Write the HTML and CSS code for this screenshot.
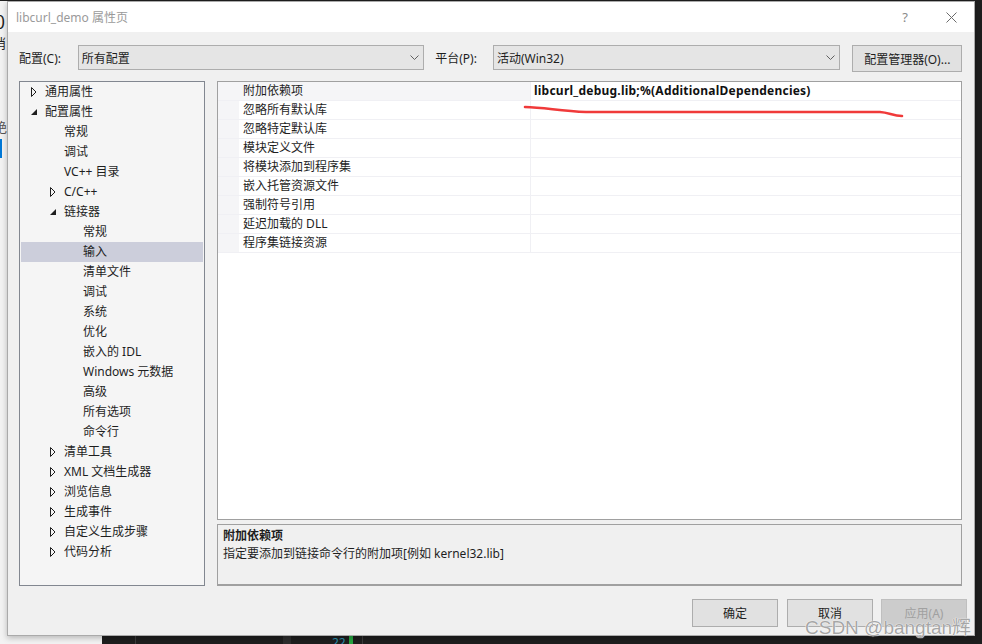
FILE: index.html
```html
<!DOCTYPE html>
<html lang="zh-CN">
<head>
    <meta charset="UTF-8">
    <title>libcurl_demo 属性页</title>
    <link rel="stylesheet" href="styles.css">
</head>
<body>
    <div class="behind-left">
        <span class="frag frag-a">0</span>
        <span class="frag frag-b">消</span>
        <span class="frag frag-c">绝</span>
        <span class="frag-bar"></span>
    </div>
    <div class="behind-bottom">
        <span class="ed-line l1"></span>
        <span class="ed-block"></span>
        <span class="ed-num">22</span>
        <span class="ed-green"></span>
        <span class="ed-line l2"></span>
    </div>

    <div class="dialog">
        <div class="titlebar">
            <span class="title">libcurl_demo 属性页</span>
            <span class="help">?</span>
            <svg class="close" width="11" height="11" viewBox="0 0 11 11"><path d="M0.5 0.5 L10.5 10.5 M10.5 0.5 L0.5 10.5" stroke="#6b6b6b" stroke-width="1"/></svg>
        </div>
        <div class="content">
            <div class="toolbar">
                <span class="lbl">配置(C):</span>
                <div class="combo combo-cfg">
                    <span>所有配置</span>
                    <svg width="9" height="5" viewBox="0 0 9 5"><path d="M0.5 0.5 L4.5 4.5 L8.5 0.5" fill="none" stroke="#606060"/></svg>
                </div>
                <span class="lbl lbl-plat">平台(P):</span>
                <div class="combo combo-plat">
                    <span>活动(Win32)</span>
                    <svg width="9" height="5" viewBox="0 0 9 5"><path d="M0.5 0.5 L4.5 4.5 L8.5 0.5" fill="none" stroke="#606060"/></svg>
                </div>
                <button class="btn btn-mgr">配置管理器(O)...</button>
            </div>

            <div class="main">
                <div class="tree">
                    <div class="node lv0"><span class="tw"><svg width="6" height="10" viewBox="0 0 6 10"><path d="M0.5 0.5 L5 5 L0.5 9.5Z" fill="none" stroke="#1e1e1e"/></svg></span>通用属性</div>
                    <div class="node lv0"><span class="tw"><svg width="6" height="6" viewBox="0 0 6 6"><path d="M6 0 L6 6 L0 6Z" fill="#1e1e1e"/></svg></span>配置属性</div>
                    <div class="node lv1"><span class="tw"></span>常规</div>
                    <div class="node lv1"><span class="tw"></span>调试</div>
                    <div class="node lv1"><span class="tw"></span>VC++ 目录</div>
                    <div class="node lv1"><span class="tw"><svg width="6" height="10" viewBox="0 0 6 10"><path d="M0.5 0.5 L5 5 L0.5 9.5Z" fill="none" stroke="#1e1e1e"/></svg></span>C/C++</div>
                    <div class="node lv1"><span class="tw"><svg width="6" height="6" viewBox="0 0 6 6"><path d="M6 0 L6 6 L0 6Z" fill="#1e1e1e"/></svg></span>链接器</div>
                    <div class="node lv2"><span class="tw"></span>常规</div>
                    <div class="node lv2 selected"><span class="tw"></span>输入</div>
                    <div class="node lv2"><span class="tw"></span>清单文件</div>
                    <div class="node lv2"><span class="tw"></span>调试</div>
                    <div class="node lv2"><span class="tw"></span>系统</div>
                    <div class="node lv2"><span class="tw"></span>优化</div>
                    <div class="node lv2"><span class="tw"></span>嵌入的 IDL</div>
                    <div class="node lv2"><span class="tw"></span>Windows 元数据</div>
                    <div class="node lv2"><span class="tw"></span>高级</div>
                    <div class="node lv2"><span class="tw"></span>所有选项</div>
                    <div class="node lv2"><span class="tw"></span>命令行</div>
                    <div class="node lv1"><span class="tw"><svg width="6" height="10" viewBox="0 0 6 10"><path d="M0.5 0.5 L5 5 L0.5 9.5Z" fill="none" stroke="#1e1e1e"/></svg></span>清单工具</div>
                    <div class="node lv1"><span class="tw"><svg width="6" height="10" viewBox="0 0 6 10"><path d="M0.5 0.5 L5 5 L0.5 9.5Z" fill="none" stroke="#1e1e1e"/></svg></span>XML 文档生成器</div>
                    <div class="node lv1"><span class="tw"><svg width="6" height="10" viewBox="0 0 6 10"><path d="M0.5 0.5 L5 5 L0.5 9.5Z" fill="none" stroke="#1e1e1e"/></svg></span>浏览信息</div>
                    <div class="node lv1"><span class="tw"><svg width="6" height="10" viewBox="0 0 6 10"><path d="M0.5 0.5 L5 5 L0.5 9.5Z" fill="none" stroke="#1e1e1e"/></svg></span>生成事件</div>
                    <div class="node lv1"><span class="tw"><svg width="6" height="10" viewBox="0 0 6 10"><path d="M0.5 0.5 L5 5 L0.5 9.5Z" fill="none" stroke="#1e1e1e"/></svg></span>自定义生成步骤</div>
                    <div class="node lv1"><span class="tw"><svg width="6" height="10" viewBox="0 0 6 10"><path d="M0.5 0.5 L5 5 L0.5 9.5Z" fill="none" stroke="#1e1e1e"/></svg></span>代码分析</div>
                </div>

                <div class="right">
                    <div class="grid">
                        <div class="row current">
                            <span class="gutter"></span>
                            <span class="name">附加依赖项</span>
                            <span class="value bold">libcurl_debug.lib;%(AdditionalDependencies)</span>
                        </div>
                        <div class="row"><span class="gutter"></span><span class="name">忽略所有默认库</span><span class="value"></span></div>
                        <div class="row"><span class="gutter"></span><span class="name">忽略特定默认库</span><span class="value"></span></div>
                        <div class="row"><span class="gutter"></span><span class="name">模块定义文件</span><span class="value"></span></div>
                        <div class="row"><span class="gutter"></span><span class="name">将模块添加到程序集</span><span class="value"></span></div>
                        <div class="row"><span class="gutter"></span><span class="name">嵌入托管资源文件</span><span class="value"></span></div>
                        <div class="row"><span class="gutter"></span><span class="name">强制符号引用</span><span class="value"></span></div>
                        <div class="row"><span class="gutter"></span><span class="name">延迟加载的 DLL</span><span class="value"></span></div>
                        <div class="row"><span class="gutter"></span><span class="name">程序集链接资源</span><span class="value"></span></div>
                    </div>
                    <div class="desc">
                        <div class="desc-title">附加依赖项</div>
                        <div class="desc-text">指定要添加到链接命令行的附加项[例如 kernel32.lib]</div>
                    </div>
                </div>
            </div>

            <div class="buttons">
                <button class="btn btn-ok">确定</button>
                <button class="btn btn-cancel">取消</button>
                <button class="btn btn-apply" disabled>应用(A)</button>
            </div>
        </div>
    </div>

    <!-- hand-drawn underline on the screenshot -->
    <svg class="scribble" width="982" height="644" viewBox="0 0 982 644">
        <path d="M525 107 C 545 107.5, 560 111, 586 112 L 880 112 C 889 112.5, 893 116, 902 116" fill="none" stroke="#f03a3a" stroke-width="2.6" stroke-linecap="round"/>
    </svg>
    <div class="watermark">CSDN @bangtan辉</div>
</body>
</html>
```

FILE: styles.css
```css
body {
    margin: 0;
    width: 982px;
    height: 644px;
    overflow: hidden;
    position: relative;
    background-color: #1e1e1e;
    font-family: "Noto Sans", "Noto Sans CJK SC", sans-serif;
    font-size: 12px;
    color: #1e1e1e;
}

/* windows behind the dialog */
.behind-left {
    position: absolute;
    left: 0;
    top: 1px;
    width: 102px;
    height: 643px;
    background-color: #f3f3f3;
    overflow: hidden;
}
.frag {
    position: absolute;
    font-family: "Noto Sans CJK SC", sans-serif;
    color: #222;
}
.frag-a {
    left: -5px;
    top: 7px;
    font-size: 18px;
}
.frag-b {
    left: -7px;
    top: 32px;
    font-size: 13px;
}
.frag-c {
    left: -6px;
    top: 116px;
    font-size: 13px;
    color: #555;
}
.frag-bar {
    position: absolute;
    left: 0;
    top: 138px;
    width: 2px;
    height: 19px;
    background-color: #0078d7;
}
.behind-bottom {
    position: absolute;
    left: 102px;
    top: 636px;
    width: 880px;
    height: 8px;
    background-color: #1e1e1e;
}
.ed-line {
    position: absolute;
    top: 0;
    width: 1px;
    height: 8px;
    background-color: #3c3c3c;
}
.ed-line.l1 { left: 33px; }
.ed-line.l2 { left: 260px; }
.ed-block {
    position: absolute;
    left: 181px;
    top: 0;
    width: 8px;
    height: 8px;
    background-color: #2d2d2d;
}
.ed-num {
    position: absolute;
    left: 230px;
    top: 1px;
    font-size: 12px;
    line-height: 12px;
    color: #2b91af;
}
.ed-green {
    position: absolute;
    left: 247px;
    top: 0;
    width: 4px;
    height: 8px;
    background-color: #26a641;
}

/* dialog */
.dialog {
    position: absolute;
    left: 7px;
    top: 1px;
    width: 966px;
    height: 633px;
    border: 1px solid #aaaaaa;
    background-color: #f0f0f0;
    box-shadow: 0 2px 6px rgba(0, 0, 0, 0.25);
    display: flex;
    flex-direction: column;
}
.titlebar {
    height: 30px;
    background-color: #fff;
    display: flex;
    align-items: center;
    padding-left: 8px;
}
.title {
    color: #9a9a9a;
    font-size: 12px;
    flex: 1;
}
.help {
    color: #8a8a8a;
    font-size: 13px;
    margin-right: 38px;
}
.close {
    margin-right: 17px;
}
.content {
    flex: 1;
    padding: 0 12px 0 11px;
    display: flex;
    flex-direction: column;
}
.toolbar {
    margin-top: 13px;
    height: 27px;
    display: flex;
    align-items: center;
}
.lbl {
    width: 59px;
    margin-top: -2px;
}
.lbl-plat {
    margin-left: 11px;
    width: 58px;
}
.combo {
    height: 23px;
    margin-top: -2px;
    border: 1px solid #adadad;
    background-color: #e5e5e5;
    display: flex;
    align-items: center;
    justify-content: space-between;
    padding: 0 4px 0 3px;
    box-sizing: content-box;
}
.combo-cfg {
    width: 339px;
}
.combo-plat {
    width: 340px;
}
.btn {
    font-family: inherit;
    font-size: 12px;
    color: #1e1e1e;
    background-color: #e1e1e1;
    border: 1px solid #adadad;
    padding: 0;
    margin: 0;
}
.btn-mgr {
    margin-left: 12px;
    width: 110px;
    height: 27px;
}

.main {
    margin-top: 9px;
    display: flex;
    gap: 12px;
    height: 505px;
}
.tree {
    width: 182px;
    border: 1px solid #828790;
    background-color: #f5f5f5;
    padding: 0 1px;
    box-sizing: content-box;
    height: 503px;
}
.node {
    height: 20px;
    line-height: 20px;
    display: flex;
    align-items: center;
    white-space: nowrap;
}
.node.lv0 { padding-left: 10px; }
.node.lv1 { padding-left: 29px; }
.node.lv2 { padding-left: 48px; }
.node.selected {
    background-color: #cccedb;
}
.tw {
    width: 14px;
    flex-shrink: 0;
    display: flex;
    align-items: center;
}

.right {
    flex: 1;
    display: flex;
    flex-direction: column;
    gap: 4px;
}
.grid {
    height: 439px;
    border: 1px solid #a0a0a0;
    background-color: #fff;
}
.row {
    display: flex;
    height: 18px;
    border-bottom: 1px solid #f0f0f4;
    line-height: 18px;
}
.gutter {
    width: 21px;
    background-color: #f5f5f7;
}
.name {
    width: 287px;
    padding-left: 4px;
    border-right: 1px solid #f0f0f4;
}
.row.current .name {
    background-color: #f5f5f7;
}
.value {
    flex: 1;
    padding-left: 3px;
}
.value.bold {
    font-weight: bold;
    color: #111;
    letter-spacing: 0.23px;
}
.desc {
    height: 57px;
    border: 1px solid #a0a0a0;
    border-bottom-width: 2px;
    padding: 2px 5px 0;
    line-height: 18px;
}
.desc-title {
    font-weight: bold;
}

.buttons {
    margin-top: 13px;
    margin-right: -5px;
    display: flex;
    justify-content: flex-end;
}
.buttons .btn {
    width: 86px;
    height: 28px;
}
.btn-ok {
    margin-right: 9px;
}
.btn-cancel {
    margin-right: 8px;
}
.btn-apply {
    background-color: #cccccc;
    border-color: #bfbfbf;
    color: #a0a0a0;
}

/* overlays on the screenshot */
.scribble {
    position: absolute;
    left: 0;
    top: 0;
    pointer-events: none;
}
.watermark {
    position: absolute;
    left: 805px;
    top: 612px;
    font-family: "Liberation Sans", "Noto Sans CJK SC", sans-serif;
    font-size: 19px;
    color: rgba(150, 150, 150, 0.85);
    text-shadow: 0 0 1px #fff, 0 0 1px #fff;
    white-space: nowrap;
}
```
